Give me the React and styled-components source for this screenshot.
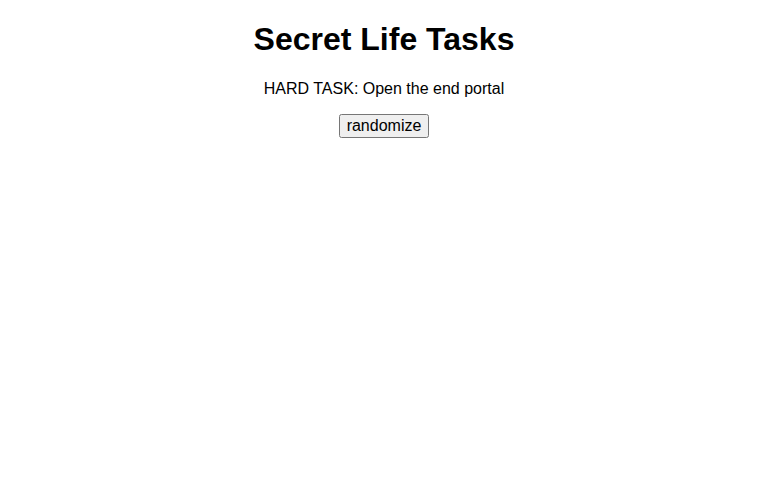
import React, { useState } from 'react';
import styled, { createGlobalStyle } from 'styled-components';

const GlobalStyle = createGlobalStyle`
  body {
    margin: 0;
    font-family: 'Liberation Sans', Arial, sans-serif;
    color: black;
    background: white;
  }
`;

const Page = styled.div`
  text-align: center;
`;

const Title = styled.h1`
  font-size: 2em;
  font-weight: bold;
  margin: 0.67em 0;
`;

const Task = styled.p`
  font-size: 16px;
  margin: 1em 0;
`;

const RandomButton = styled.button`
  font-family: 'Liberation Sans', Arial, sans-serif;
  font-size: 16px;
`;

const tasks = [
  'HARD TASK: Open the end portal',
  'HARD TASK: Kill a wither',
  'EASY TASK: Craft a cake',
  'EASY TASK: Tame a wolf',
];

const App = () => {
  const [task, setTask] = useState(tasks[0]);

  const randomize = () => {
    setTask(tasks[Math.floor(Math.random() * tasks.length)]);
  };

  return (
    <Page>
      <GlobalStyle />
      <Title>Secret Life Tasks</Title>
      <Task>{task}</Task>
      <RandomButton onClick={randomize}>randomize</RandomButton>
    </Page>
  );
};

export default App;
